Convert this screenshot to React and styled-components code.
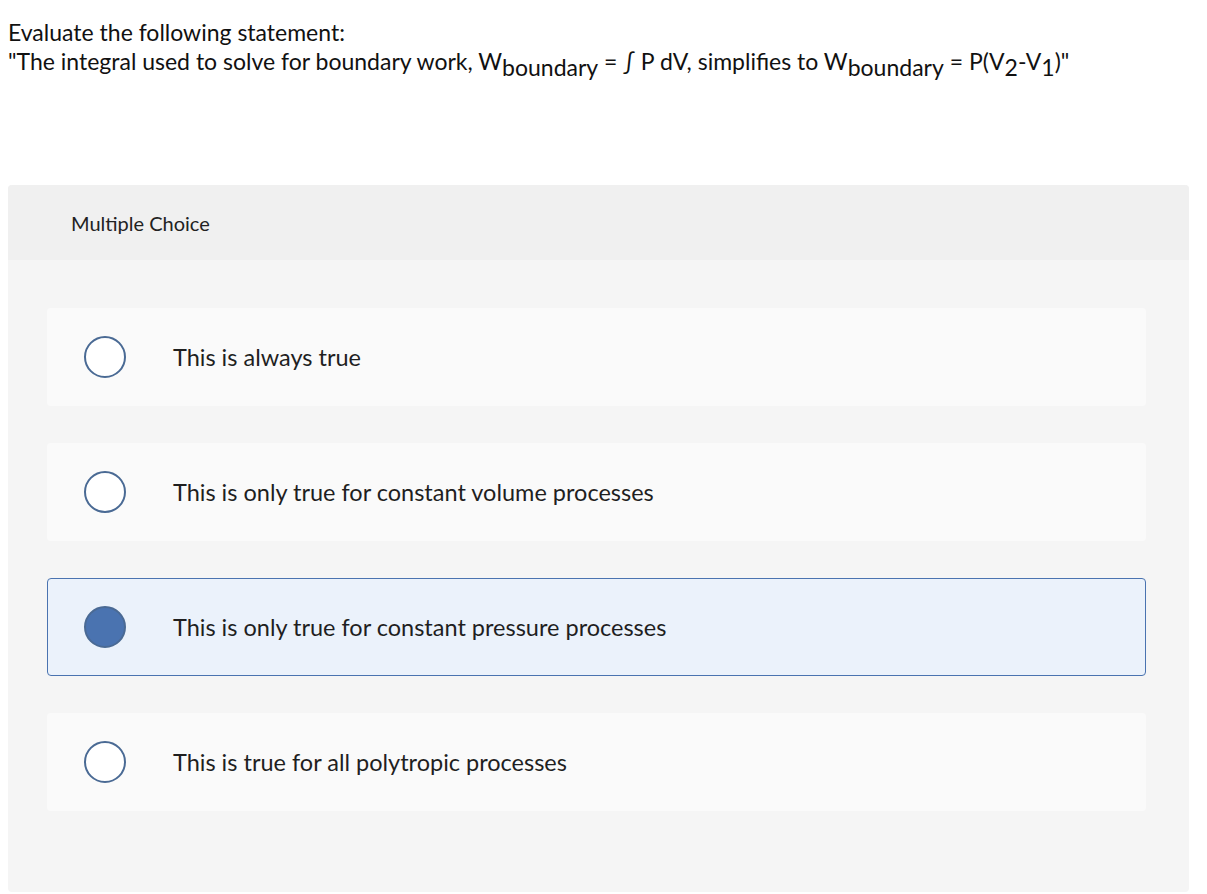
import React, { useState } from "react";
import styled, { createGlobalStyle } from "styled-components";

const GlobalStyle = createGlobalStyle`
  html, body {
    margin: 0;
    padding: 0;
    background: #ffffff;
  }
  body {
    font-family: Lato, "Open Sans", "Liberation Sans", sans-serif;
    color: #1f1f1f;
  }
`;

const options = [
  "This is always true",
  "This is only true for constant volume processes",
  "This is only true for constant pressure processes",
  "This is true for all polytropic processes",
];

export default function App() {
  const [selected, setSelected] = useState(2);

  return (
    <Page>
      <GlobalStyle />
      <Prompt>
        <p>Evaluate the following statement:</p>
        <p>
          "The integral used to solve for boundary work, W<Sub>boundary</Sub> = ∫ P dV,
          simplifies to W<Sub>boundary</Sub> = P(V<Sub>2</Sub>-V<Sub>1</Sub>)"
        </p>
      </Prompt>

      <Card>
        <CardHeader>Multiple Choice</CardHeader>
        <OptionList>
          {options.map((text, i) => (
            <Option key={i} $active={selected === i} onClick={() => setSelected(i)}>
              <Radio $active={selected === i} />
              <OptionText>{text}</OptionText>
            </Option>
          ))}
        </OptionList>
      </Card>
    </Page>
  );
}

const Page = styled.div`
  padding: 0 8px;
  width: 1181px;
`;

const Prompt = styled.div`
  padding-top: 18px;
  font-size: 23px;
  color: #111;
  p {
    margin: 0;
    line-height: 29px;
  }
`;

const Sub = styled.sub`
  font-size: 1em;
  vertical-align: -6px;
  line-height: 0;
`;

const Card = styled.div`
  margin-top: 109px;
  background: #f5f5f5;
  border-radius: 4px;
  height: 707px;
  overflow: hidden;
`;

const CardHeader = styled.div`
  background: #f0f0f0;
  height: 75px;
  display: flex;
  align-items: center;
  padding-left: 63px;
  font-size: 20px;
  color: #222;
`;

const OptionList = styled.div`
  display: flex;
  flex-direction: column;
  gap: 37px;
  padding: 48px 43px 0 39px;
`;

const Option = styled.div`
  height: 98px;
  box-sizing: border-box;
  display: flex;
  align-items: center;
  background: ${(p) => (p.$active ? "#ebf2fb" : "#fafafa")};
  border: 1px solid ${(p) => (p.$active ? "#4a73b0" : "transparent")};
  border-radius: 4px;
  padding-left: 36px;
  cursor: pointer;
`;

const Radio = styled.span`
  width: 42px;
  height: 42px;
  box-sizing: border-box;
  border-radius: 50%;
  border: 2px solid #4a6a94;
  background: ${(p) => (p.$active ? "#4a73b0" : "#ffffff")};
  flex-shrink: 0;
`;

const OptionText = styled.span`
  margin-left: 47px;
  font-size: 23.5px;
  color: #1f1f1f;
`;
